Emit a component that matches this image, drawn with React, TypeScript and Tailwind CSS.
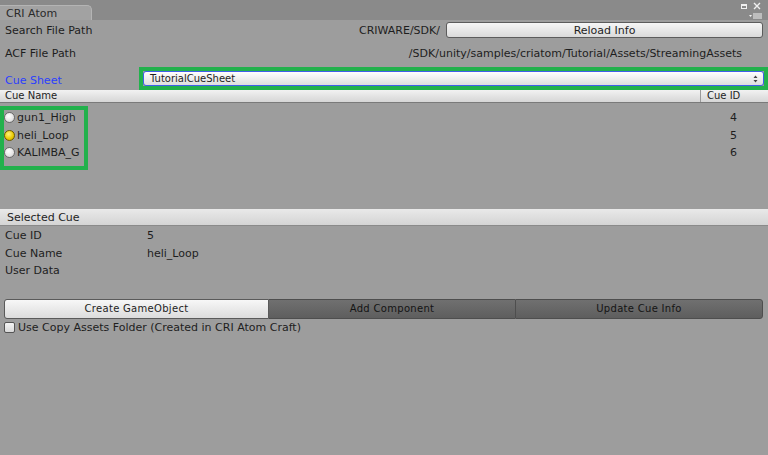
import React from 'react';

const cues = [
  { name: 'gun1_High', id: 4, selected: false },
  { name: 'heli_Loop', id: 5, selected: true },
  { name: 'KALIMBA_G', id: 6, selected: false },
];

const Radio: React.FC<{ on: boolean }> = ({ on }) => (
  <span
    className={
      on
        ? 'w-[11px] h-[11px] rounded-full border border-[#6b5a00] bg-[radial-gradient(circle_at_40%_35%,#fff27a,#e8c800_60%,#b89a00)] shrink-0'
        : 'w-[11px] h-[11px] rounded-full border border-[#6a6a6a] bg-[radial-gradient(circle_at_40%_35%,#ffffff,#e4e4e4_60%,#bdbdbd)] shrink-0'
    }
  />
);

export default function App() {
  return (
    <div className="w-[768px] h-[455px] bg-[#9d9d9d] text-[#1e1e1e] text-[11px] leading-none overflow-hidden relative" style={{ fontFamily: '"DejaVu Sans", Verdana, sans-serif' }}>
      {/* title strip */}
      <div className="h-[20px] bg-[#8a8a8a] flex items-end relative">
        <div className="w-[92px] h-[15px] bg-[#a2a2a2] border-t border-r border-[#b4b4b4] rounded-tr-[5px] pl-[6px] flex items-center text-[#2a2a2a]">
          CRI Atom
        </div>
        <div className="absolute right-[6px] top-[2px] flex flex-col items-end gap-[3px] text-[#e8e8e8]">
          <div className="flex items-center gap-[6px]">
            <span className="w-[6px] h-[5px] border border-[#f0f0f0] border-t-2" />
            <svg width="8" height="8" viewBox="0 0 8 8" className="mr-[1px]">
              <path d="M1 1 L7 7 M7 1 L1 7" stroke="#f0f0f0" strokeWidth="1.4" />
            </svg>
          </div>
          <svg width="13" height="6" viewBox="0 0 13 6">
            <path d="M0 2 L3 2 L1.5 4 Z" fill="#f0f0f0" />
            <path d="M4 1 H13 M4 3 H13 M4 5 H13" stroke="#f0f0f0" strokeWidth="1" />
          </svg>
        </div>
      </div>

      {/* Search File Path */}
      <div className="h-[20px] flex items-center pl-[5px] pr-[5px]">
        <span className="flex-1">Search File Path</span>
        <span className="mr-[6px]">CRIWARE/SDK/</span>
        <button className="w-[317px] h-[16px] rounded-[3px] border border-[#5c5c5c] bg-gradient-to-b from-[#f6f6f6] to-[#dadada] text-[#1e1e1e] text-[11px] leading-none flex items-center justify-center">
          Reload Info
        </button>
      </div>

      {/* ACF File Path */}
      <div className="h-[27px] flex items-center pl-[5px] pr-[26px]">
        <span className="flex-1">ACF File Path</span>
        <span>/SDK/unity/samples/criatom/Tutorial/Assets/StreamingAssets</span>
      </div>

      {/* Cue Sheet */}
      <div className="h-[23px] flex items-center pl-[5px]">
        <span className="w-[134px] text-[#2b3fff] pt-[4px]">Cue Sheet</span>
        <div className="flex-1 h-[23px] border-4 border-[#22b14c]">
          <div className="h-[15px] rounded-[3px] border border-[#3f5fe8] bg-gradient-to-b from-[#ffffff] to-[#dedede] flex items-center pl-[6px] pr-[5px] text-[10px]">
            <span className="flex-1">TutorialCueSheet</span>
            <svg width="5" height="8" viewBox="0 0 5 8">
              <path d="M2.5 0.5 L4.5 3 L0.5 3 Z M2.5 7.5 L4.5 5 L0.5 5 Z" fill="#444" />
            </svg>
          </div>
        </div>
      </div>

      {/* header */}
      <div className="h-[13px] flex bg-gradient-to-b from-[#f2f2f2] to-[#d6d6d6] border-b border-[#7a7a7a] text-[10px]">
        <div className="w-[701px] pl-[5px] flex items-center border-r border-[#9a9a9a]">Cue Name</div>
        <div className="flex-1 pl-[6px] flex items-center">Cue ID</div>
      </div>

      {/* list */}
      <div className="h-[106px] pt-[6px] relative">
        {cues.map((c) => (
          <div key={c.name} className="h-[17.5px] flex items-center">
            <div className="w-[701px] flex items-center gap-[2px] pl-[4px]">
              <Radio on={c.selected} />
              <span>{c.name}</span>
            </div>
            <span className="pl-[29px]">{c.id}</span>
          </div>
        ))}
        <div className="absolute left-0 top-[3px] w-[88px] h-[64px] border-4 border-[#22b14c]" />
      </div>

      {/* Selected Cue */}
      <div className="h-[17px] flex items-center pl-[7px] bg-gradient-to-b from-[#e9e9e9] to-[#d4d4d4] border-b border-[#8a8a8a]">
        Selected Cue
      </div>
      <div className="pt-[1px] pl-[5px]">
        {[
          ['Cue ID', '5'],
          ['Cue Name', 'heli_Loop'],
          ['User Data', ''],
        ].map(([k, v]) => (
          <div key={k} className="h-[17.5px] flex items-center">
            <span className="w-[142px]">{k}</span>
            <span>{v}</span>
          </div>
        ))}
      </div>

      {/* buttons */}
      <div className="mt-[19px] ml-[4px] mr-[5px] h-[20px] flex text-[10px] tracking-[0.3px]">
        <button className="w-[265px] h-full rounded-l-[3px] border border-[#5a5a5a] bg-gradient-to-b from-[#f7f7f7] to-[#dcdcdc] flex items-center justify-center">
          Create GameObject
        </button>
        <button className="w-[246px] h-full border-y border-[#4e4e4e] bg-gradient-to-b from-[#707070] to-[#5e5e5e] flex items-center justify-center text-[#141414]">
          Add Component
        </button>
        <button className="flex-1 h-full rounded-r-[3px] border border-[#4e4e4e] bg-gradient-to-b from-[#707070] to-[#5e5e5e] flex items-center justify-center text-[#141414]">
          Update Cue Info
        </button>
      </div>

      {/* checkbox */}
      <div className="h-[18px] pl-[4px] flex items-center gap-[3px]">
        <span className="w-[11px] h-[11px] rounded-[2px] border border-[#555] bg-gradient-to-b from-[#f4f4f4] to-[#d8d8d8]" />
        <span>Use Copy Assets Folder (Created in CRI Atom Craft)</span>
      </div>
    </div>
  );
}
